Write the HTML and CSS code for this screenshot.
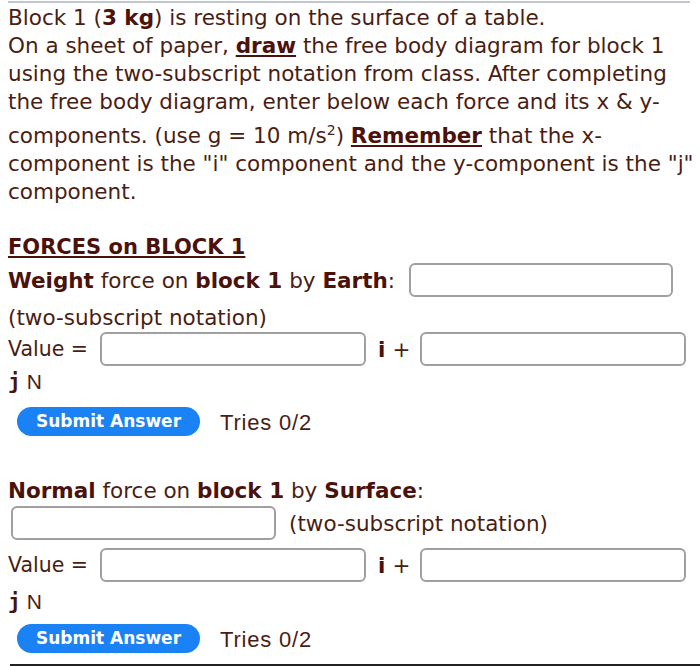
FILE: index.html
```html
<!DOCTYPE html>
<html>
<head>
<meta charset="utf-8">
<link rel="stylesheet" href="styles.css">
</head>
<body>
<div class="page">
  <div class="top-rule"></div>
  <p class="intro">Block 1 (<b>3 kg</b>) is resting on the surface of a table.<br>On a sheet of paper, <b><u>draw</u></b> the free body diagram for block 1 using the two-subscript notation from class. After completing the free body diagram, enter below each force and its x &amp; y-components. (use g = 10 m/s<sup>2</sup>) <b><u>Remember</u></b> that the x-component is the "i" component and the y-component is the "j" component.</p>

  <div class="heading"><b><u>FORCES on BLOCK 1</u></b></div>

  <div class="force weight">
    <div class="row title"><span><b>Weight</b> force on <b>block 1</b> by <b>Earth</b>:</span><span class="box name-box"></span></div>
    <div class="row note">(two-subscript notation)</div>
    <div class="row value"><span class="val-label">Value =</span><span class="box comp"></span><b class="unit">i</b><span class="plus">+</span><span class="box comp"></span></div>
    <div class="row jn"><b class="jj">j</b><span>N</span></div>
    <div class="row submit"><span class="btn">Submit Answer</span><span class="tries">Tries 0/2</span></div>
  </div>

  <div class="force normal">
    <div class="row title"><span><b>Normal</b> force on <b>block 1</b> by <b>Surface</b>:</span></div>
    <div class="row named"><span class="box name-box2"></span><span class="note2">(two-subscript notation)</span></div>
    <div class="row value"><span class="val-label">Value =</span><span class="box comp"></span><b class="unit">i</b><span class="plus">+</span><span class="box comp"></span></div>
    <div class="row jn"><b class="jj">j</b><span>N</span></div>
    <div class="row submit"><span class="btn">Submit Answer</span><span class="tries">Tries 0/2</span></div>
  </div>
  <div class="bottom-rule"></div>
</div>
</body>
</html>
```

FILE: styles.css
```css
html, body { margin: 0; padding: 0; background: #fff; }
body {
  font-family: "DejaVu Sans", Verdana, sans-serif;
  color: #4a1d12;
  font-size: 21.5px;
}
.page { padding: 0 0 0 8px; width: 692px; }
b { color: #4a120a; }
.top-rule { height: 2px; background: #c3c7cf; margin-top: 1px; width: 682px; }
.intro { margin: 1px 0 0 0; line-height: 28px; font-size: 21.5px; width: 692px; }
.intro sup { font-size: 14px; line-height: 28px; }
.heading { margin-top: 27px; line-height: 28px; font-size: 21px; }
.row { display: flex; align-items: center; white-space: nowrap; }
.title { height: 28px; }
.weight .title { height: 34px; margin-top: 2px; gap: 14px; }
.box {
  display: inline-block;
  box-sizing: border-box;
  border: 2px solid #a0a0a0;
  border-radius: 6px;
  height: 34px;
  background: #fff;
}
.name-box { width: 264px; }
.note { height: 28px; margin-top: 6px; }
.value { height: 34px; margin-top: 1px; }
.val-label { width: 92px; font-size: 20.5px; }
.comp { width: 266px; }
.unit { margin-left: 12px; }
.plus { margin-left: 7px; margin-right: 10px; }
.jn { height: 28px; margin-top: 2px; font-family: "Liberation Sans", Arial, sans-serif; font-size: 21px; }
.jj { font-family: "DejaVu Sans Mono", monospace; font-size: 21px; margin-right: 6px; }
.submit { height: 29px; margin-top: 11px; margin-left: 9px; }
.btn {
  display: inline-block;
  background: #1b82f6;
  color: #fff;
  font-family: "DejaVu Sans", Verdana, sans-serif;
  font-weight: bold;
  font-size: 17px;
  border-radius: 15px;
  height: 29px;
  line-height: 29px;
  width: 183px;
  text-align: center;
}
.tries { font-family: "Liberation Sans", Arial, sans-serif; margin-left: 20px; font-size: 22px; letter-spacing: 0.8px; padding-top: 3px; }
.normal { margin-top: 40px; }
.normal .title { height: 28px; }
.named { height: 34px; margin-top: 2px; }
.name-box2 { width: 265px; margin-left: 3px; }
.note2 { margin-left: 13px; }
.normal .value { margin-top: 8px; }
.normal .jn { margin-top: 6px; }
.normal .submit { margin-top: 8px; }
.bottom-rule { height: 2px; background: #222; margin-top: 11px; margin-left: 2px; width: 690px; }
```
